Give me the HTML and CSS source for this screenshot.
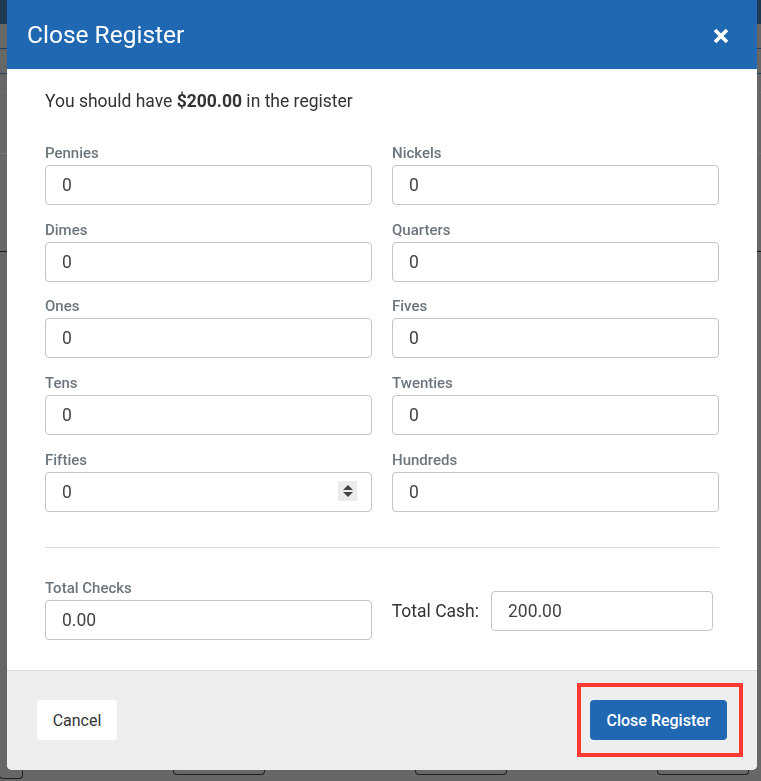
FILE: index.html
```html
<!DOCTYPE html>
<html lang="en">

  <head>
    <meta charset="UTF-8">
    <meta name="viewport" content="width=device-width, initial-scale=1.0">
    <title>Close Register</title>
    <link rel="stylesheet" href="styles.css">
  </head>

  <body>
    <!-- page behind the dialog -->
    <div class="page">
      <div class="page-bar"></div>
      <div class="page-row blue"></div>
      <div class="page-row blue"></div>
      <div class="page-row"></div>
      <div class="page-row light"></div>
      <div class="page-row dark"></div>
      <div class="page-fill"></div>
      <div class="page-actions">
        <span class="page-btn first"></span>
        <span class="page-btn"></span>
        <span class="page-btn"></span>
        <span class="page-btn"></span>
      </div>
    </div>

    <div class="modal">
      <div class="modal-header">
        <h1>Close Register</h1>
        <button class="close" aria-label="Close">
          <svg width="16" height="16" viewBox="0 0 16 16">
            <path d="M2 2 L14 14 M14 2 L2 14" stroke="#fff" stroke-width="3.6" fill="none"/>
          </svg>
        </button>
      </div>

      <div class="modal-body">
        <p class="expected">You should have <strong>$200.00</strong> in the register</p>

        <div class="counts">
          <label class="field">
            <span>Pennies</span>
            <input type="text" value="0">
          </label>
          <label class="field">
            <span>Nickels</span>
            <input type="text" value="0">
          </label>
          <label class="field">
            <span>Dimes</span>
            <input type="text" value="0">
          </label>
          <label class="field">
            <span>Quarters</span>
            <input type="text" value="0">
          </label>
          <label class="field">
            <span>Ones</span>
            <input type="text" value="0">
          </label>
          <label class="field">
            <span>Fives</span>
            <input type="text" value="0">
          </label>
          <label class="field">
            <span>Tens</span>
            <input type="text" value="0">
          </label>
          <label class="field">
            <span>Twenties</span>
            <input type="text" value="0">
          </label>
          <label class="field">
            <span>Fifties</span>
            <div class="spin-wrap">
              <input type="text" value="0">
              <i class="spinner"><b class="up"></b><b class="down"></b></i>
            </div>
          </label>
          <label class="field">
            <span>Hundreds</span>
            <input type="text" value="0">
          </label>
        </div>

        <hr>

        <div class="totals">
          <label class="field">
            <span>Total Checks</span>
            <input type="text" value="0.00">
          </label>
          <div class="cash">
            <span>Total Cash:</span>
            <input type="text" value="200.00">
          </div>
        </div>
      </div>

      <div class="modal-footer">
        <button class="btn cancel">Cancel</button>
        <div class="highlight">
          <button class="btn primary">Close Register</button>
        </div>
      </div>
    </div>
  </body>

</html>
```

FILE: styles.css
```css
body {
  margin: 0;
  padding: 0;
  overflow: hidden;
  font-family: Roboto, "Liberation Sans", sans-serif;
  background: #676767;
}

/* the greyed-out page under the dialog */
.page {
  height: 781px;
  display: flex;
  flex-direction: column;
}

.page-bar {
  height: 24px;
  background: #1e3b55;
}

.page-row {
  height: 18px;
  border-bottom: 1px solid #6f6f6f;
}

.page-row.blue {
  height: 24px;
  border-bottom-color: #1f3f62;
}

.page-row.light {
  height: 60px;
  border-bottom-color: #747474;
}

.page-row.dark {
  height: 97px;
  border-bottom-color: #1b1b1b;
}

.page-fill {
  flex: 1;
}

.page-actions {
  height: 18px;
  display: flex;
  padding-bottom: 6px;
}

.page-btn {
  width: 90px;
  border: 1px solid #222;
  border-top: 0;
  border-radius: 0 0 4px 4px;
  margin-left: 150px;
}

.page-btn.first {
  width: 22px;
  margin-left: -1px;
  margin-bottom: -4px;
}

/* dialog */
.modal {
  position: fixed;
  top: 0;
  left: 7px;
  width: 750px;
  background: #fff;
  border-radius: 0 0 5px 5px;
  overflow: hidden;
}

.modal-header {
  height: 69px;
  background: #2168b3;
  display: flex;
  align-items: center;
  justify-content: space-between;
  padding: 0 28px 0 20px;
}

.modal-header h1 {
  margin: 0;
  color: #fff;
  font-size: 24.5px;
  font-weight: 400;
}

.close {
  background: none;
  border: 0;
  padding: 0;
  display: flex;
  margin-top: 2px;
}

.modal-body {
  padding: 20px 38px 30px;
}

.expected {
  margin: 0 0 32px;
  font-size: 17.5px;
  line-height: 24px;
  color: #333;
}

.expected strong {
  font-weight: 700;
}

.counts {
  display: grid;
  grid-template-columns: 1fr 1fr;
  column-gap: 20px;
  row-gap: 16.7px;
}

.field {
  display: flex;
  flex-direction: column;
}

.field > span {
  font-size: 15px;
  line-height: 17px;
  font-weight: 500;
  color: #6c757d;
  margin-bottom: 3px;
}

input {
  box-sizing: border-box;
  height: 40px;
  width: 100%;
  border: 1px solid #c4c4c4;
  border-radius: 4px;
  padding: 0 15px 0 16px;
  font-family: inherit;
  font-size: 17.5px;
  color: #444;
  background: #fff;
}

.spin-wrap {
  position: relative;
}

.spinner {
  position: absolute;
  right: 15px;
  top: 9px;
  width: 19px;
  height: 20px;
  background: #ebebeb;
  display: flex;
  flex-direction: column;
  align-items: center;
  justify-content: center;
  gap: 2px;
}

.spinner b {
  width: 0;
  height: 0;
  border-left: 5px solid transparent;
  border-right: 5px solid transparent;
}

.spinner .up {
  border-bottom: 5px solid #444;
}

.spinner .down {
  border-top: 5px solid #444;
}

hr {
  border: 0;
  border-top: 1px solid #ddd;
  margin: 35px 0 32px;
}

.totals {
  display: grid;
  grid-template-columns: 1fr 1fr;
  column-gap: 20px;
  align-items: center;
}

.cash {
  display: flex;
  align-items: center;
  gap: 12px;
  padding-right: 6px;
  margin-top: 2px;
}

.cash span {
  font-size: 17.5px;
  color: #333;
  white-space: nowrap;
}

.cash input {
  width: 222px;
}

.modal-footer {
  height: 99px;
  background: #eee;
  border-top: 1px solid #ddd;
  display: flex;
  align-items: center;
  justify-content: space-between;
  padding: 0 14px 0 30px;
}

.btn {
  height: 40px;
  border: 0;
  border-radius: 4px;
  font-family: inherit;
  font-size: 16px;
  padding: 0 12px;
}

.cancel {
  width: 80px;
  background: #fff;
  color: #333;
}

.primary {
  width: 137px;
  background: #2168b3;
  color: #fff;
  font-weight: 500;
}

/* red call-out box round the main action */
.highlight {
  border: 4px solid #fb3a32;
  padding: 13px 12px 13px 9px;
  display: flex;
}
```
